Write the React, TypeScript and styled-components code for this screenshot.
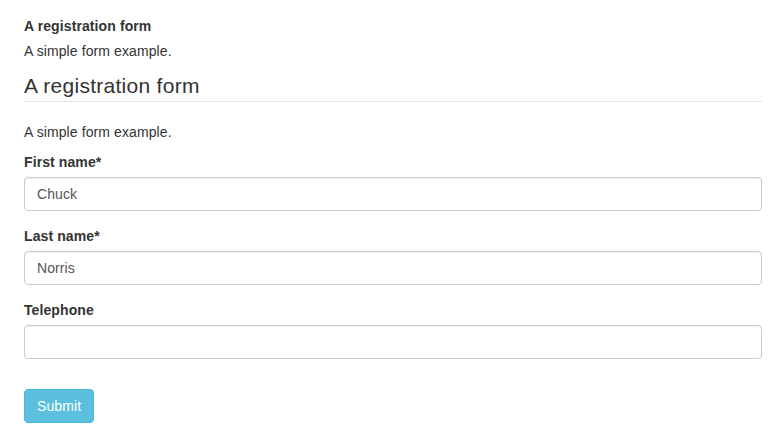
import styled, { createGlobalStyle } from "styled-components";

const GlobalStyle = createGlobalStyle`
	* {
		box-sizing: border-box;
	}
	body {
		margin: 0;
		background: #fff;
		font-family: "Liberation Sans", Arial, Helvetica, sans-serif;
		font-size: 14px;
		line-height: 1.42857143;
		letter-spacing: 0.1px;
		color: #333;
	}
`;

const Page = styled.div`
	padding: 16px 15px 0 24px;
`;

const Title = styled.label`
	display: block;
	font-weight: bold;
	margin-bottom: 5px;
`;

const Description = styled.p`
	margin: 0 0 10px;
`;

const Fieldset = styled.fieldset`
	margin: 0;
	padding: 0;
	border: 0;
	min-width: 0;
`;

const Legend = styled.legend`
	display: block;
	width: 100%;
	padding: 0;
	margin-bottom: 20px;
	font-size: 21px;
	line-height: inherit;
	letter-spacing: 0.28px;
	color: #333;
	border: 0;
	border-bottom: 1px solid #e5e5e5;
`;

const FormGroup = styled.div`
	margin-bottom: 15px;
`;

const Label = styled.label`
	display: inline-block;
	max-width: 100%;
	margin-bottom: 5px;
	font-weight: bold;
`;

const Input = styled.input`
	display: block;
	width: 100%;
	height: 34px;
	padding: 6px 12px;
	font-family: inherit;
	font-size: 14px;
	line-height: 1.42857143;
	letter-spacing: inherit;
	color: #555;
	background: #fff;
	border: 1px solid #ccc;
	border-radius: 4px;
	box-shadow: inset 0 1px 1px rgba(0, 0, 0, 0.075);
	outline: none;
`;

const Actions = styled.div`
	padding-top: 15px;
`;

const Button = styled.button`
	display: inline-block;
	padding: 6px 12px;
	font-family: inherit;
	font-size: 14px;
	line-height: 1.42857143;
	letter-spacing: inherit;
	color: #fff;
	background: #5bc0de;
	border: 1px solid #46b8da;
	border-radius: 4px;
	cursor: pointer;
`;

const fields = [
	{ id: "firstName", label: "First name*", value: "Chuck" },
	{ id: "lastName", label: "Last name*", value: "Norris" },
	{ id: "telephone", label: "Telephone", value: "" },
];

export default function App() {
	return (
		<>
			<GlobalStyle />
			<Page>
				<Title>A registration form</Title>
				<Description>A simple form example.</Description>
				<form onSubmit={(e) => e.preventDefault()}>
					<Fieldset>
						<Legend>A registration form</Legend>
						<Description>A simple form example.</Description>
						{fields.map((f) => (
							<FormGroup key={f.id}>
								<Label htmlFor={f.id}>{f.label}</Label>
								<Input id={f.id} type="text" defaultValue={f.value} />
							</FormGroup>
						))}
					</Fieldset>
					<Actions>
						<Button type="submit">Submit</Button>
					</Actions>
				</form>
			</Page>
		</>
	);
}
